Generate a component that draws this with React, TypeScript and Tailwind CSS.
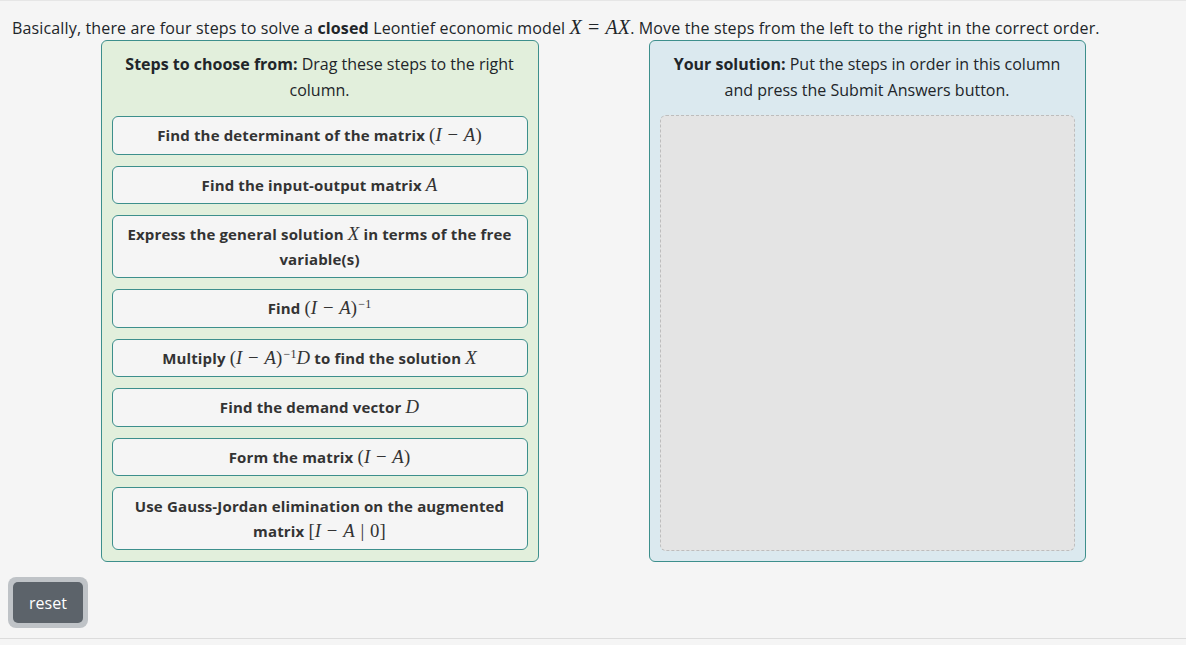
import React from 'react';

const M = ({ children }: { children: React.ReactNode }) => (
  <span className="font-['Liberation_Serif',serif] italic text-[1.25em] font-normal leading-[0]">{children}</span>
);
const R = ({ children }: { children: React.ReactNode }) => (
  <span className="font-['Liberation_Serif',serif] text-[1.25em] font-normal leading-[0]">{children}</span>
);
const Op = ({ children }: { children: React.ReactNode }) => (
  <span className="mx-[0.3em] font-['Liberation_Serif',serif] text-[1.25em] font-normal leading-[0]">{children}</span>
);
const Sup = () => (
  <sup className="ml-[1px] font-['Liberation_Serif',serif] font-normal text-[12px] leading-[0]">−1</sup>
);

const steps: React.ReactNode[] = [
  <>Find the determinant of the matrix <R>(</R><M>I</M><Op>−</Op><M>A</M><R>)</R></>,
  <>Find the input-output matrix <M>A</M></>,
  <>Express the general solution <M>X</M> in terms of the free variable(s)</>,
  <>Find <R>(</R><M>I</M><Op>−</Op><M>A</M><R>)</R><Sup /></>,
  <>Multiply <R>(</R><M>I</M><Op>−</Op><M>A</M><R>)</R><Sup /><M>D</M> to find the solution <M>X</M></>,
  <>Find the demand vector <M>D</M></>,
  <>Form the matrix <R>(</R><M>I</M><Op>−</Op><M>A</M><R>)</R></>,
  <>Use Gauss-Jordan elimination on the augmented matrix <R>[</R><M>I</M><Op>−</Op><M>A</M><Op>|</Op><R>0]</R></>,
];

export default function App() {
  return (
    <div className="min-h-[645px] bg-[#f5f5f5] font-['Open_Sans',sans-serif] text-[#212529]">
      <div className="border-t border-[#e6e6e6]" />
      <div className="border-b border-[#dcdcdc] pb-[10px]">
        <p className="px-[12px] pt-[15px] text-[16px] leading-[24px] tracking-[0.15px]">
          Basically, there are four steps to solve a <b>closed</b> Leontief economic model{' '}
          <M>X</M><Op>=</Op><M>AX</M>. Move the steps from the left to the right in the correct order.
        </p>

        <div className="flex justify-center gap-[110px]">
          {/* Left column */}
          <div className="w-[438px] rounded-[6px] border border-[#3d8f8c] bg-[#e2efdc] px-[10px] pt-[10px] pb-[11px]">
            <div className="text-center text-[16px] leading-[26px] px-[10px]">
              <b>Steps to choose from:</b> Drag these steps to the right column.
            </div>
            <div className="mt-[13px] flex flex-col gap-[11px]">
              {steps.map((s, i) => (
                <div
                  key={i}
                  className="rounded-[6px] border border-[#3d8f8c] bg-[#f5f5f5] px-[12px] py-[6px] text-center text-[15px] font-bold leading-[24.5px] tracking-[0.15px] text-[#333]"
                >
                  {s}
                </div>
              ))}
            </div>
          </div>

          {/* Right column */}
          <div className="flex w-[437px] flex-col rounded-[6px] border border-[#3d8f8c] bg-[#dbe9ef] px-[10px] pt-[10px] pb-[10px]">
            <div className="text-center text-[16px] leading-[26px] px-[10px]">
              <b>Your solution:</b> Put the steps in order in this column and press the Submit Answers button.
            </div>
            <div className="mt-[12px] flex-1 rounded-[6px] border border-dashed border-[#bdbdbd] bg-[#e4e4e4]" />
          </div>
        </div>

        <div className="px-[8px] pt-[15px]">
          <button className="rounded-[8px] bg-[#bfc3c7] p-[5px]">
            <span className="block rounded-[5px] bg-[#5c636a] px-[16px] py-[8.5px] text-[16px] leading-[24px] text-white">
              reset
            </span>
          </button>
        </div>
      </div>
    </div>
  );
}
